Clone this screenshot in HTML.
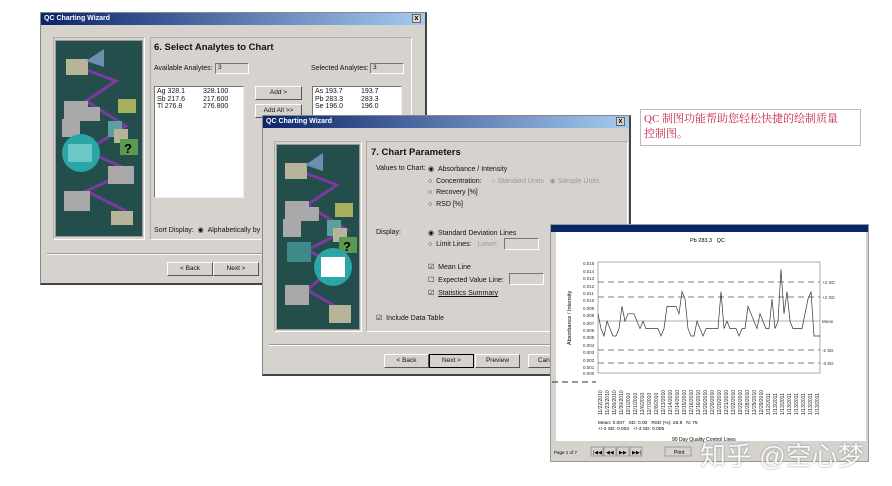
<!DOCTYPE html>
<html><head><meta charset="utf-8"><style>
*{margin:0;padding:0;box-sizing:border-box}
body{width:892px;height:486px;background:#fff;position:relative;overflow:hidden;font-family:"Liberation Sans",sans-serif;font-size:7px;color:#111}
.a{position:absolute}
.win{position:absolute;background:#d6d3ce;border:1px solid #888;border-right:2px solid #444;border-bottom:2px solid #444}
.tb{position:absolute;left:0;right:0;top:0;height:12px;background:linear-gradient(90deg,#0a246a,#a6caf0);color:#fff;font-weight:bold;font-size:7px;padding:2px 3px}
.x{position:absolute;right:4px;top:1px;width:9px;height:9px;background:#d6d3ce;border:1px solid #666;color:#000;font-size:7px;line-height:7px;text-align:center}
.side{position:absolute;background:#244e4c;border:1px solid #999}
.panel{position:absolute;border:1px solid #b0ada8;border-right-color:#fff;border-bottom-color:#fff}
.btn{position:absolute;height:14px;background:#d6d3ce;border:1px solid #fff;border-right-color:#555;border-bottom-color:#555;text-align:center;line-height:12px;font-size:6.5px}
.box{position:absolute;background:#fff;border:1px solid #777;border-right-color:#eee;border-bottom-color:#eee}
.fld{position:absolute;background:#d6d3ce;border:1px solid #777;border-right-color:#fff;border-bottom-color:#fff;height:11px;font-size:6.5px;padding-left:2px}
h3{position:absolute;font-size:9.5px;font-weight:bold}
.r{position:absolute;font-size:7px;white-space:nowrap}
.sep{position:absolute;height:2px;border-top:1px solid #999;border-bottom:1px solid #fff}
</style></head><body>

<!-- Window 1 -->
<div class="win" style="left:40px;top:12px;width:387px;height:273px">
 <div class="tb">QC Charting Wizard<div class="x">x</div></div>
 <div class="panel" style="left:12px;top:24px;width:92px;height:203px"></div>
 <div class="side" style="left:14px;top:27px;width:88px;height:197px">
  <svg width="88" height="197"><g fill="none" stroke="#7a3aa0" stroke-width="3"><path d="M20 25 L60 40 L30 60 L70 85 L30 110 L75 130 L30 150 L70 170"/></g>
  <rect x="10" y="18" width="22" height="16" fill="#b8b49a"/><path d="M30 20 L48 8 L48 26Z" fill="#6b8fb0"/>
  <rect x="62" y="58" width="18" height="14" fill="#a8b060"/>
  <rect x="8" y="60" width="24" height="20" fill="#a9a9a9"/><rect x="28" y="66" width="16" height="14" fill="#a9a9a9"/><rect x="6" y="78" width="18" height="18" fill="#a9a9a9"/>
  <rect x="52" y="80" width="14" height="16" fill="#5aa0a0"/><rect x="58" y="88" width="14" height="14" fill="#b8b49a"/><rect x="64" y="98" width="18" height="16" fill="#5a9a50"/><text x="68" y="112" font-size="13" font-weight="bold">?</text>
  <circle cx="25" cy="112" r="19" fill="#2aa6a6"/><rect x="12" y="103" width="24" height="18" fill="#6cc8c8"/>
  <rect x="52" y="125" width="26" height="18" fill="#a8a8a8"/><rect x="8" y="150" width="26" height="20" fill="#a8a8a8"/>
  <rect x="55" y="170" width="22" height="14" fill="#b8b49a"/></svg>
 </div>
 <div class="panel" style="left:109px;top:24px;width:262px;height:203px"></div>
 <h3 style="left:113px;top:29px">6. Select Analytes to Chart</h3>
 <div class="r" style="left:113px;top:52px">Available Analytes:</div><div class="fld" style="left:174px;top:50px;width:34px">3</div>
 <div class="r" style="left:270px;top:52px">Selected Analytes:</div><div class="fld" style="left:329px;top:50px;width:34px">3</div>
 <div class="box" style="left:113px;top:73px;width:90px;height:112px"><div class="r" style="left:2px;top:1px;line-height:7.5px">Ag 328.1<br>Sb 217.6<br>Tl 276.8</div><div class="r" style="left:48px;top:1px;line-height:7.5px">328.100<br>217.600<br>276.800</div></div>
 <div class="btn" style="left:214px;top:73px;width:47px">Add &gt;</div>
 <div class="btn" style="left:214px;top:91px;width:47px">Add All &gt;&gt;</div>
 <div class="box" style="left:271px;top:73px;width:90px;height:40px"><div class="r" style="left:2px;top:1px;line-height:7.5px">As 193.7<br>Pb 283.3<br>Se 196.0</div><div class="r" style="left:48px;top:1px;line-height:7.5px">193.7<br>283.3<br>196.0</div></div>
 <div class="r" style="left:113px;top:213px">Sort Display: &nbsp;◉ &nbsp;Alphabetically by N</div>
 <div class="sep" style="left:6px;right:6px;top:240px"></div>
 <div class="btn" style="left:126px;top:249px;width:46px">&lt; Back</div>
 <div class="btn" style="left:172px;top:249px;width:46px">Next &gt;</div>
</div>

<!-- Window 2 -->
<div class="win" style="left:262px;top:115px;width:369px;height:261px">
 <div class="tb">QC Charting Wizard<div class="x">x</div></div>
 <div class="panel" style="left:11px;top:25px;width:88px;height:191px"></div>
 <div class="side" style="left:13px;top:28px;width:84px;height:186px">
  <svg width="84" height="186"><g fill="none" stroke="#7a3aa0" stroke-width="3"><path d="M20 25 L60 40 L30 60 L70 85 L30 105 L60 120 L30 145 L65 165"/></g>
  <rect x="8" y="18" width="22" height="16" fill="#b8b49a"/><path d="M28 20 L46 8 L46 26Z" fill="#6b8fb0"/>
  <rect x="58" y="58" width="18" height="14" fill="#a8b060"/>
  <rect x="8" y="56" width="24" height="20" fill="#a9a9a9"/><rect x="26" y="62" width="16" height="14" fill="#a9a9a9"/><rect x="6" y="74" width="18" height="18" fill="#a9a9a9"/>
  <rect x="50" y="75" width="14" height="16" fill="#5aa0a0"/><rect x="56" y="83" width="14" height="14" fill="#b8b49a"/><rect x="62" y="92" width="18" height="16" fill="#5a9a50"/><text x="66" y="106" font-size="13" font-weight="bold">?</text>
  <rect x="10" y="97" width="24" height="20" fill="#3e8a88"/>
  <circle cx="56" cy="122" r="19" fill="#2aa6a6"/><rect x="44" y="112" width="24" height="20" fill="#fff"/>
  <rect x="8" y="140" width="24" height="20" fill="#a8a8a8"/><rect x="52" y="160" width="22" height="18" fill="#b8b49a"/></svg>
 </div>
 <div class="panel" style="left:103px;top:25px;width:262px;height:191px"></div>
 <h3 style="left:108px;top:31px">7. Chart Parameters</h3>
 <div class="r" style="left:113px;top:49px">Values to Chart:</div>
 <div class="r" style="left:165px;top:49px">◉ &nbsp;Absorbance / Intensity</div>
 <div class="r" style="left:165px;top:61px">○ &nbsp;Concentration: <span style="color:#999">&nbsp;&nbsp;&nbsp;&nbsp;○ Standard Units &nbsp;&nbsp;◉ Sample Units</span></div>
 <div class="r" style="left:165px;top:73px">○ &nbsp;Recovery [%]</div>
 <div class="r" style="left:165px;top:85px">○ &nbsp;RSD [%]</div>
 <div class="r" style="left:113px;top:113px">Display:</div>
 <div class="r" style="left:165px;top:113px">◉ &nbsp;Standard Deviation Lines</div>
 <div class="r" style="left:165px;top:125px">○ &nbsp;Limit Lines: &nbsp;&nbsp;<span style="color:#999">Lower:</span></div>
 <div class="fld" style="left:241px;top:122px;width:35px;height:12px"></div>
 <div class="r" style="left:165px;top:147px">☑ &nbsp;Mean Line</div>
 <div class="r" style="left:165px;top:160px">☐ &nbsp;Expected Value Line:</div>
 <div class="fld" style="left:246px;top:157px;width:35px;height:12px"></div>
 <div class="r" style="left:165px;top:173px">☑ &nbsp;<u>Statistics Summary</u></div>
 <div class="r" style="left:113px;top:198px">☑ &nbsp;Include Data Table</div>
 <div class="sep" style="left:6px;right:6px;top:228px"></div>
 <div class="btn" style="left:121px;top:238px;width:45px">&lt; Back</div>
 <div class="btn" style="left:166px;top:238px;width:45px;border:1px solid #000">Next &gt;</div>
 <div class="btn" style="left:212px;top:238px;width:45px">Preview</div>
 <div class="btn" style="left:265px;top:238px;width:40px">Cancel</div>
</div>

<!-- red note -->
<div class="a" style="left:640px;top:109px;width:221px;height:37px;border:1px solid #bbb;color:#c8284a;font-family:'Liberation Serif','Noto Serif CJK SC',serif;font-size:11px;line-height:15px;padding:2px 3px;white-space:nowrap">QC 制图功能帮助您轻松快捷的绘制质量<br>控制图。</div>

<!-- Chart window -->
<div class="a" style="left:550px;top:224px;width:319px;height:238px;background:#d6d3ce;border:1px solid #999"></div>
<div class="a" style="left:551px;top:225px;width:317px;height:7px;background:#0a246a"></div>
<div class="a" style="left:556px;top:232px;width:310px;height:209px;background:#fff"></div>
<svg class="a" style="left:0;top:0" width="892" height="486" font-family="Liberation Sans,sans-serif">
 <text x="690" y="242" font-size="5.5">Pb 283.3 &#160;&#160;QC</text>
 <rect x="598" y="262" width="222" height="111" fill="none" stroke="#777" stroke-width="0.6"/>
 <g stroke="#555" stroke-width="0.8" stroke-dasharray="6,4"><line x1="598" y1="282" x2="820" y2="282"/><line x1="598" y1="297" x2="820" y2="297"/><line x1="598" y1="350" x2="820" y2="350"/><line x1="598" y1="363" x2="820" y2="363"/><line x1="552" y1="382" x2="596" y2="382" stroke-width="1.2"/></g>
 <line x1="598" y1="321" x2="820" y2="321" stroke="#666" stroke-width="0.6"/>
 <g font-size="4.5" fill="#333"><text x="822" y="284">+3 SD</text><text x="822" y="299">+2 SD</text><text x="822" y="323">Mean</text><text x="822" y="352">-2 SD</text><text x="822" y="365">-3 SD</text>
 <text x="583" y="265">0.015</text><text x="583" y="273">0.014</text><text x="583" y="280">0.013</text><text x="583" y="288">0.012</text><text x="583" y="295">0.011</text><text x="583" y="302">0.010</text><text x="583" y="310">0.009</text><text x="583" y="317">0.008</text><text x="583" y="325">0.007</text><text x="583" y="332">0.006</text><text x="583" y="339">0.005</text><text x="583" y="347">0.004</text><text x="583" y="354">0.003</text><text x="583" y="362">0.002</text><text x="583" y="369">0.001</text><text x="583" y="375">0.000</text></g>
 <text x="571" y="345" font-size="5.5" transform="rotate(-90 571 345)">Absorbance / Intensity</text>
 <polyline fill="none" stroke="#333" stroke-width="0.7" points="598,313.8 601,328.6 604,336 607,321.2 610,328.6 613,336 616,336 619,328.6 622,306.4 625,321.2 628,313.8 631,313.8 634,313.8 637,321.2 640,328.6 643,321.2 646,328.6 649,328.6 652,328.6 655,328.6 658,328.6 661,336 664,328.6 667,306.4 670,306.4 673,306.4 676,306.4 679,313.8 682,291.6 685,299 688,328.6 691,336 694,336 697,321.2 700,328.6 703,336 706,328.6 709,328.6 712,328.6 715,328.6 718,328.6 721,291.6 724,328.6 727,321.2 730,328.6 733,328.6 736,328.6 739,336 742,328.6 745,328.6 748,306.4 751,313.8 754,321.2 757,328.6 760,313.8 763,321.2 766,328.6 769,328.6 772,299 775,328.6 778,321.2 781,269.4 784,313.8 787,291.6 790,321.2 793,328.6 796,328.6 799,328.6 802,328.6 805,313.8 808,299 811,291.6 814,336 817,336 820,336"/>
 <g font-size="5" fill="#222">
  <text transform="translate(602,415) rotate(-90)">11/22/2010</text><text transform="translate(609,415) rotate(-90)">11/23/2010</text><text transform="translate(616,415) rotate(-90)">11/26/2010</text><text transform="translate(623,415) rotate(-90)">11/30/2010</text><text transform="translate(630,415) rotate(-90)">12/1/2010</text><text transform="translate(637,415) rotate(-90)">12/1/2010</text><text transform="translate(644,415) rotate(-90)">12/6/2010</text><text transform="translate(651,415) rotate(-90)">12/7/2010</text><text transform="translate(658,415) rotate(-90)">12/8/2010</text><text transform="translate(665,415) rotate(-90)">12/13/2010</text><text transform="translate(672,415) rotate(-90)">12/14/2010</text><text transform="translate(679,415) rotate(-90)">12/14/2010</text><text transform="translate(686,415) rotate(-90)">12/15/2010</text><text transform="translate(693,415) rotate(-90)">12/16/2010</text><text transform="translate(700,415) rotate(-90)">12/16/2010</text><text transform="translate(707,415) rotate(-90)">12/20/2010</text><text transform="translate(714,415) rotate(-90)">12/20/2010</text><text transform="translate(721,415) rotate(-90)">12/20/2010</text><text transform="translate(728,415) rotate(-90)">12/21/2010</text><text transform="translate(735,415) rotate(-90)">12/22/2010</text><text transform="translate(742,415) rotate(-90)">12/22/2010</text><text transform="translate(749,415) rotate(-90)">12/28/2010</text><text transform="translate(756,415) rotate(-90)">12/29/2010</text><text transform="translate(763,415) rotate(-90)">12/29/2010</text><text transform="translate(770,415) rotate(-90)">1/12/2011</text><text transform="translate(777,415) rotate(-90)">1/13/2011</text><text transform="translate(784,415) rotate(-90)">1/13/2011</text><text transform="translate(791,415) rotate(-90)">1/13/2011</text><text transform="translate(798,415) rotate(-90)">1/13/2011</text><text transform="translate(805,415) rotate(-90)">1/13/2011</text><text transform="translate(812,415) rotate(-90)">1/13/2011</text><text transform="translate(819,415) rotate(-90)">1/13/2011</text>
 </g>
 <text x="598" y="424" font-size="4.8">Mean: 0.007 &#160;&#160;SD: 0.00 &#160;&#160;RSD (%): 25.8 &#160;&#160;N: 75</text>
 <text x="598" y="430" font-size="4.8">+/-2 SD: 0.004 &#160;&#160;+/-3 SD: 0.005</text>
 <text x="672" y="441" font-size="5">90 Day Quality Control Lines</text>
 <text x="554" y="454" font-size="4.5">Page 1 of 7</text>
 <g fill="#d6d3ce" stroke="#666" stroke-width="0.5"><rect x="591" y="447" width="12" height="9"/><rect x="604" y="447" width="12" height="9"/><rect x="617" y="447" width="12" height="9"/><rect x="630" y="447" width="12" height="9"/><rect x="665" y="447" width="26" height="9"/></g>
 <g font-size="5" fill="#000"><text x="593" y="454">|◀◀</text><text x="606" y="454">◀◀</text><text x="619" y="454">▶▶</text><text x="632" y="454">▶▶|</text><text x="674" y="454">Print</text></g>
</svg>
<div class="a" style="left:700px;top:436px;font-family:'Liberation Sans','Noto Sans CJK SC',sans-serif;font-size:26px;color:#fff;opacity:.85;text-shadow:0 0 2px #777;white-space:nowrap">知乎 @空心梦</div>
</body></html>
